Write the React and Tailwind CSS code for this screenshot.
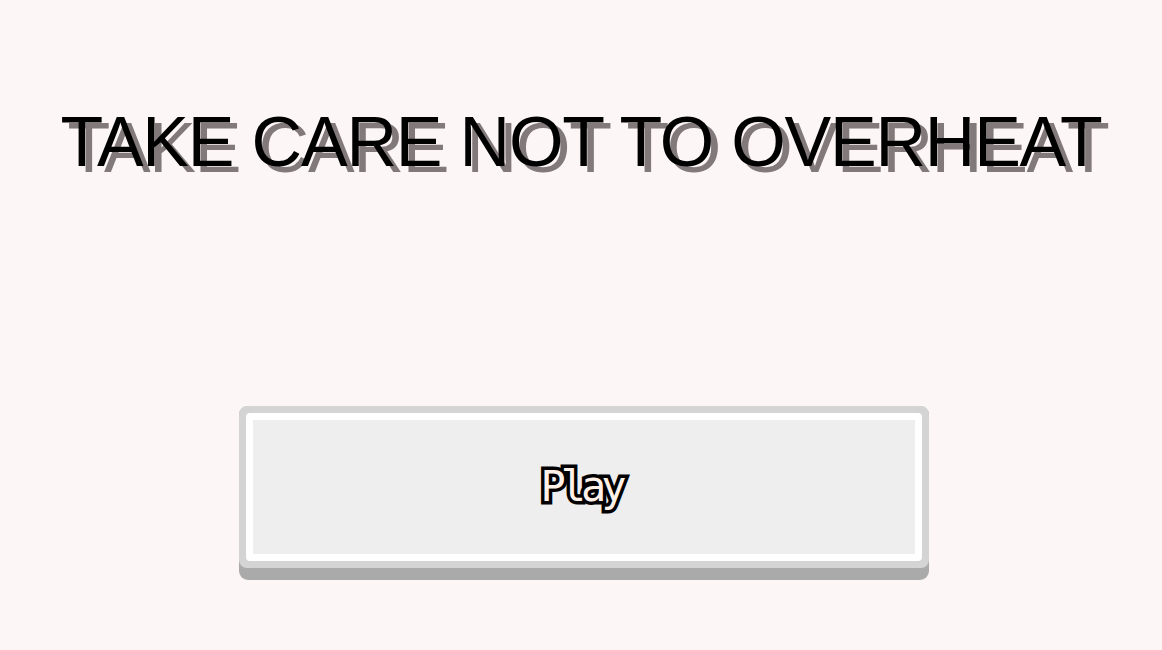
export default function App() {
  return (
    <div className="h-[650px] w-full bg-[#fdf6f6] flex flex-col items-center overflow-hidden">
      {/* heading with a flat offset drop shadow */}
      <h1 className="mt-[107px] text-[70px] leading-none tracking-[-1.2px] text-black font-['Liberation_Sans',Arial,sans-serif] [text-shadow:7px_6px_0_#827a7a] whitespace-nowrap">
        TAKE CARE NOT TO OVERHEAT
      </h1>

      <div className="mt-[229px] flex justify-center w-full pl-[6px]">
        <button className="w-[690px] rounded-[9px] bg-[#aaaaaa] pb-[12px] cursor-pointer">
          <div className="rounded-[8px] border-[7px] border-[#d4d4d4] bg-[#d4d4d4]">
            <div className="h-[148px] rounded-[4px] border-[7px] border-white bg-[#eeeeee] flex items-center justify-center">
              <span className="pr-[6px] text-[42px] leading-none font-normal tracking-[-5px] text-[#fff1e8] font-['DejaVu_Sans_Mono',monospace] [-webkit-text-stroke:7px_black] [paint-order:stroke_fill]">
                Play
              </span>
            </div>
          </div>
        </button>
      </div>
    </div>
  );
}
